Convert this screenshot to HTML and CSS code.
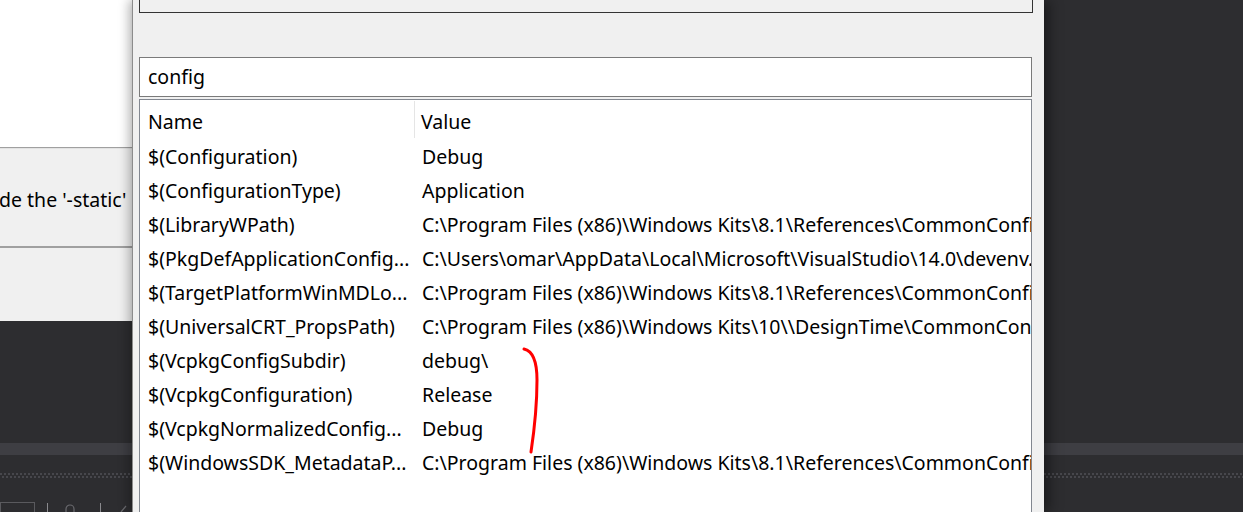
FILE: index.html
```html
<!DOCTYPE html>
<html>
<head>
<meta charset="utf-8">
<link rel="stylesheet" href="styles.css">
</head>
<body>
<div class="screen">
  <div class="left">
    <div class="white-pane"></div>
    <div class="msg-pane"><span class="msg">de the '-static'</span></div>
    <div class="btn-pane"></div>
    <div class="dark-area">
      <div class="dark-fill"></div>
      <div class="band"></div>
      <div class="dark-gap"></div>
      <div class="dots"></div>
      <div class="dark-gap2"></div>
      <svg class="toolbar" width="132" height="10" viewBox="0 0 132 10">
        <rect x="0.5" y="0.5" width="34" height="14" fill="none" stroke="#5a5a5e"/>
        <line x1="47.5" y1="1" x2="47.5" y2="10" stroke="#8a8a8e"/>
        <path d="M66 10 V7 A4 4 0 0 1 74 7 V10" fill="none" stroke="#6a6a6e" stroke-width="1.2"/>
        <line x1="100.5" y1="1" x2="100.5" y2="10" stroke="#8a8a8e"/>
        <line x1="121" y1="10" x2="126" y2="4" stroke="#6a6a6e" stroke-width="1.2"/>
      </svg>
    </div>
  </div>

  <div class="dialog">
    <div class="top-box"></div>
    <div class="search">config</div>
    <div class="list">
      <div class="row head">
        <div class="c-name">Name</div>
        <div class="sep"></div>
        <div class="c-val">Value</div>
      </div>
      <div class="row"><div class="c-name">$(Configuration)</div><div class="c-val">Debug</div></div>
      <div class="row"><div class="c-name">$(ConfigurationType)</div><div class="c-val">Application</div></div>
      <div class="row"><div class="c-name">$(LibraryWPath)</div><div class="c-val">C:\Program Files (x86)\Windows Kits\8.1\References\CommonConfiguration\Neutral</div></div>
      <div class="row"><div class="c-name">$(PkgDefApplicationConfig...</div><div class="c-val">C:\Users\omar\AppData\Local\Microsoft\VisualStudio\14.0\devenv.exe.config</div></div>
      <div class="row"><div class="c-name">$(TargetPlatformWinMDLo...</div><div class="c-val">C:\Program Files (x86)\Windows Kits\8.1\References\CommonConfiguration\Neutral</div></div>
      <div class="row"><div class="c-name">$(UniversalCRT_PropsPath)</div><div class="c-val">C:\Program Files (x86)\Windows Kits\10\\DesignTime\CommonConfiguration\Neutral</div></div>
      <div class="row"><div class="c-name">$(VcpkgConfigSubdir)</div><div class="c-val">debug\</div></div>
      <div class="row"><div class="c-name">$(VcpkgConfiguration)</div><div class="c-val">Release</div></div>
      <div class="row"><div class="c-name">$(VcpkgNormalizedConfig...</div><div class="c-val">Debug</div></div>
      <div class="row"><div class="c-name">$(WindowsSDK_MetadataP...</div><div class="c-val">C:\Program Files (x86)\Windows Kits\8.1\References\CommonConfiguration\Neutral</div></div>
    </div>
  </div>

  <div class="right">
    <div class="dark-fill"></div>
    <div class="band"></div>
    <div class="dark-gap"></div>
    <div class="dots"></div>
  </div>
</div>

<svg class="annot" width="1243" height="512" viewBox="0 0 1243 512">
  <path d="M524 349 C533 351 537 361 537 380 C537 410 534 432 531 452" fill="none" stroke="#ff0000" stroke-width="3" stroke-linecap="round"/>
</svg>
</body>
</html>
```

FILE: styles.css
```css
html, body {
  margin: 0;
  padding: 0;
  width: 1243px;
  height: 512px;
  overflow: hidden;
  background: #2d2d30;
  font-family: "Noto Sans", "Open Sans", sans-serif;
  font-size: 19.5px;
  color: #000;
}

.screen {
  display: grid;
  grid-template-columns: 132px 912px 1fr;
  height: 512px;
}

/* ---------- left background window ---------- */
.left {
  display: flex;
  flex-direction: column;
  overflow: hidden;
  min-width: 0;
}
.white-pane {
  height: 147px;
  background: #fff;
  border-bottom: 1px solid #a0a0a0;
  flex: none;
}
.msg-pane {
  height: 97px;
  background: #f0f0f0;
  border-top: 1px solid #e3e3e3;
  border-bottom: 2px solid #a0a0a0;
  display: flex;
  align-items: center;
  white-space: nowrap;
  overflow: hidden;
  flex: none;
}
.msg {
  margin-left: -1px;
  padding-top: 4px;
}
.btn-pane {
  height: 73px;
  background: #f0f0f0;
  flex: none;
}
.dark-area {
  flex: 1;
  display: flex;
  flex-direction: column;
  background: #2d2d30;
}
.dark-fill { height: 122px; flex: none; }
.band { height: 12px; background: #3e3e43; flex: none; }
.dark-gap { height: 18px; flex: none; }
.dots {
  height: 6px;
  flex: none;
  background-image:
    radial-gradient(circle at 1px 1px, #47474c 0.9px, transparent 1.1px),
    radial-gradient(circle at 3px 4px, #47474c 0.9px, transparent 1.1px);
  background-size: 4px 6px;
}
.dark-gap2 { height: 23px; flex: none; }
.toolbar { display: block; flex: none; }

/* ---------- dialog ---------- */
.dialog {
  position: relative;
  z-index: 1;
  background: #f0f0f0;
  border-left: 1px solid #8c8c8c;
  box-shadow: -4px 0 10px rgba(0, 0, 0, 0.22), 6px 0 12px rgba(0, 0, 0, 0.35);
  padding: 0 11px 0 6px;
  display: flex;
  flex-direction: column;
  min-width: 0;
}
.top-box {
  height: 12px;
  border: 1px solid #333;
  border-top: none;
  flex: none;
}
.search {
  margin-top: 44px;
  margin-right: 1px;
  height: 38px;
  border: 1px solid #7a7a7a;
  background: #fff;
  padding-left: 8px;
  line-height: 37px;
  flex: none;
}
.list {
  margin-top: 2px;
  margin-right: 1px;
  border: 1px solid #828790;
  border-bottom: none;
  background: #fff;
  flex: 1;
  overflow: hidden;
}
.row {
  display: flex;
  height: 34px;
  align-items: center;
  white-space: nowrap;
}
.row.head {
  height: 40px;
}
.c-name {
  width: 268px;
  padding-left: 8px;
  flex: none;
  overflow: hidden;
  padding-bottom: 2px;
}
.c-val {
  padding-left: 6px;
  flex: 1;
  min-width: 0;
  overflow: hidden;
  padding-bottom: 2px;
}
.head .c-name {
  width: 266px;
  padding-bottom: 0;
  padding-top: 2px;
}
.head .c-val {
  padding-left: 6px;
  padding-bottom: 0;
  padding-top: 2px;
}
.sep {
  width: 1px;
  align-self: stretch;
  margin: 1px 0 2px;
  background: #e5e5e5;
  flex: none;
}

/* ---------- right background ---------- */
.right {
  display: flex;
  flex-direction: column;
  background: #2d2d30;
}
.right .dark-fill { height: 443px; }

/* ---------- annotation ---------- */
.annot {
  position: absolute;
  left: 0;
  top: 0;
  z-index: 5;
  pointer-events: none;
}
```
